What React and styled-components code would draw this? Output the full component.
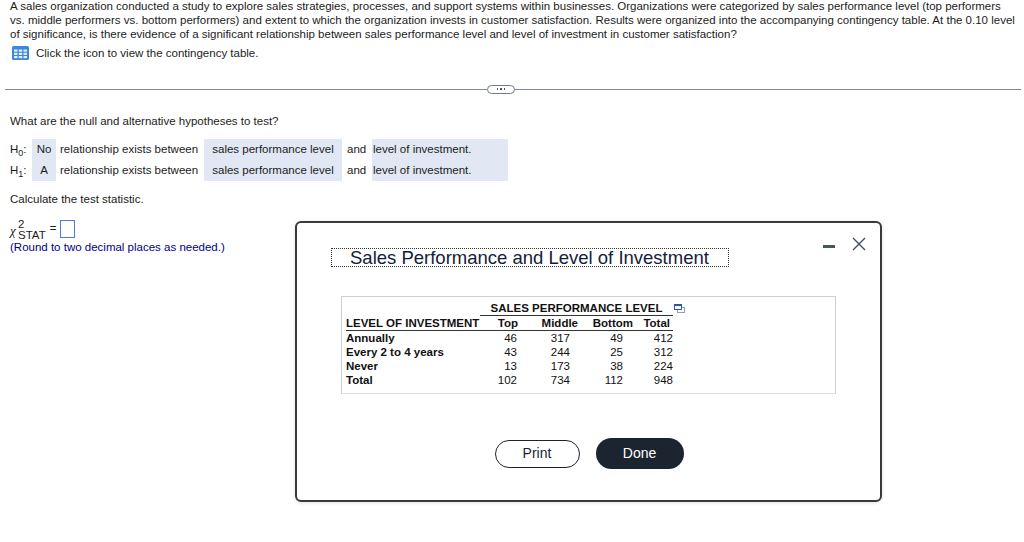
import React from 'react';
import styled, { createGlobalStyle } from 'styled-components';

const GlobalStyle = createGlobalStyle`
  html, body { margin: 0; padding: 0; background: #fff; }
  body {
    font-family: "Liberation Sans", Arial, sans-serif;
    font-size: 11.5px;
    color: #1c1c1c;
  }
`;

const Page = styled.div`
  position: relative;
  width: 1024px;
  height: 542px;
  overflow: hidden;
`;

const Intro = styled.div`
  padding-left: 10px;
  margin-top: -1px;
  line-height: 14px;
  height: 41px;
  white-space: nowrap;
`;

const IconLine = styled.div`
  display: flex;
  align-items: center;
  gap: 7px;
  height: 16px;
  margin: 5px 0 0 12px;
`;

const DividerRow = styled.div`
  display: flex;
  align-items: center;
  height: 10px;
  margin: 23px 3px 0 5px;
`;

const Rule = styled.div`
  height: 1px;
  background: #7d8794;
  flex: ${(p) => p.$grow};
`;

const MoreButton = styled.div`
  width: 26px;
  height: 7px;
  border: 1px solid #6f7c8d;
  border-radius: 5px;
  display: flex;
  align-items: center;
  justify-content: center;
  gap: 2px;
  background: #fff;
`;

const Dot = styled.span`
  width: 1.5px;
  height: 1.5px;
  background: #44546a;
`;

const Question = styled.div`
  margin: ${(p) => p.$top}px 0 0 10px;
  line-height: 14px;
`;

const HypothesisGrid = styled.div`
  display: grid;
  grid-template-columns: 22px 24px 148px 138px 30px 136px;
  grid-auto-rows: 21px;
  margin: 11px 0 0 10px;
  align-items: center;
`;

const Cell = styled.div`
  height: 21px;
  line-height: 20px;
  white-space: nowrap;
  background: ${(p) => (p.$fill ? '#e1e8f3' : 'transparent')};
  text-align: ${(p) => p.$align || 'left'};
  padding-left: ${(p) => p.$pad || 0}px;
`;

const Sub = styled.sub`
  font-size: 9px;
  line-height: 0;
`;

const Formula = styled.div`
  display: flex;
  align-items: center;
  height: 20px;
  margin: 12px 0 0 10px;
`;

const Chi = styled.span`
  font-family: "Liberation Serif", serif;
  font-style: italic;
  font-size: 13px;
  width: 8px;
  margin-top: 5px;
`;

const Stack = styled.span`
  display: inline-flex;
  flex-direction: column;
  font-size: 11.5px;
  line-height: 11px;
  margin-top: 4px;
`;

const Equals = styled.span`
  margin: 0 4px 0 4px;
`;

const AnswerBox = styled.div`
  width: 13px;
  height: 16px;
  margin-top: 1px;
  border: 1px solid #4f7fd0;
  box-shadow: inset 0 0 1px #a9c2ea;
`;

const Note = styled.div`
  margin: 2px 0 0 10px;
  line-height: 14px;
  color: #00008b;
`;

const Modal = styled.div`
  position: absolute;
  left: 295px;
  top: 221px;
  width: 583px;
  height: 277px;
  background: #fff;
  border: 2px solid #3a3a3a;
  border-radius: 6px;
  box-shadow: 0 1px 4px rgba(0, 0, 0, 0.12);
  display: flex;
  flex-direction: column;
`;

const WindowControls = styled.div`
  position: absolute;
  right: 14px;
  top: 14px;
  display: flex;
  align-items: center;
  gap: 17px;
`;

const Minimize = styled.div`
  width: 12px;
  height: 3px;
  margin-top: 4px;
  background: #4a5563;
`;

const Title = styled.div`
  box-sizing: border-box;
  width: 398px;
  height: 19px;
  margin: 25px 0 0 34px;
  padding-left: 18px;
  border: 1px dotted #333;
  font-size: 18.5px;
  line-height: 18px;
  color: #14203a;
  white-space: nowrap;
`;

const TablePanel = styled.div`
  box-sizing: border-box;
  position: relative;
  width: 495px;
  height: 98px;
  margin: 29px 0 0 44px;
  padding: 4px 0 0 4px;
  border: 1px solid #cfcfcf;
  border-bottom-color: #e2e2e2;
`;

const DataTable = styled.table`
  border-collapse: collapse;
  table-layout: fixed;
  width: 327px;
  font-size: 11.5px;
  color: #111;
  line-height: 14px;
`;

const Col = styled.col`
  width: ${(p) => p.$w}px;
`;

const Th = styled.th`
  padding: 0 ${(p) => p.$pr || 0}px 0 0;
  height: 14px;
  font-weight: 700;
  text-align: ${(p) => p.$align || 'right'};
  white-space: nowrap;
  border-bottom: ${(p) => (p.$line ? '1px solid #333' : 'none')};
`;

const Td = styled.td`
  padding: 0 ${(p) => p.$pr}px 0 0;
  height: 14px;
  text-align: right;
`;

const RowLabel = styled.td`
  padding: 0;
  height: 14px;
  font-weight: 700;
  white-space: nowrap;
`;

const CopyIcon = styled.svg`
  position: absolute;
  left: 332px;
  top: 7px;
`;

const ButtonRow = styled.div`
  display: flex;
  align-items: center;
  gap: 16px;
  margin: 44px 0 0 198px;
`;

const PillButton = styled.div`
  box-sizing: border-box;
  display: flex;
  align-items: center;
  justify-content: center;
  padding: 0 1px 1px 0;
  font-size: 14px;
  border-radius: 16px;
  width: ${(p) => (p.$primary ? 88 : 85)}px;
  height: ${(p) => (p.$primary ? 31 : 28)}px;
  color: ${(p) => (p.$primary ? '#fff' : '#1c2430')};
  background: ${(p) => (p.$primary ? '#1c2430' : '#fff')};
  border: ${(p) => (p.$primary ? 'none' : '1.5px solid #1c2430')};
`;

const rows = [
  ['Annually', 46, 317, 49, 412],
  ['Every 2 to 4 years', 43, 244, 25, 312],
  ['Never', 13, 173, 38, 224],
  ['Total', 102, 734, 112, 948],
];

// right padding of the numbers, per column
const numberPad = [1, 10, 12, 0];

function GridIcon() {
  return (
    <svg width="17" height="14" viewBox="0 0 17 14">
      <rect width="17" height="14" rx="1.5" fill="#3b86de" />
      {[3.5, 6.75, 10].map((y) =>
        [2, 6.75, 11.5].map((x) => (
          <rect key={`${x}-${y}`} x={x} y={y} width="3.5" height="2.2" fill="#e3eefb" />
        ))
      )}
    </svg>
  );
}

function App() {
  return (
    <Page>
      <GlobalStyle />
      <Intro>
        A sales organization conducted a study to explore sales strategies, processes, and support systems within businesses. Organizations were categorized by sales performance level (top performers<br />
        vs. middle performers vs. bottom performers) and extent to which the organization invests in customer satisfaction. Results were organized into the accompanying contingency table. At the 0.10 level<br />
        of significance, is there evidence of a significant relationship between sales performance level and level of investment in customer satisfaction?
      </Intro>
      <IconLine>
        <GridIcon />
        <span>Click the icon to view the contingency table.</span>
      </IconLine>
      <DividerRow>
        <Rule $grow="0 0 482px" />
        <MoreButton><Dot /><Dot /><Dot /></MoreButton>
        <Rule $grow="1" />
      </DividerRow>
      <Question $top={20}>What are the null and alternative hypotheses to test?</Question>
      <HypothesisGrid>
        <Cell>H<Sub>0</Sub>:</Cell>
        <Cell $fill $align="center">No</Cell>
        <Cell $pad={4}>relationship exists between</Cell>
        <Cell $fill $align="center">sales performance level</Cell>
        <Cell $pad={5}>and</Cell>
        <Cell $fill $pad={1}>level of investment.</Cell>
        <Cell>H<Sub>1</Sub>:</Cell>
        <Cell $fill $align="center">A</Cell>
        <Cell $pad={4}>relationship exists between</Cell>
        <Cell $fill $align="center">sales performance level</Cell>
        <Cell $pad={5}>and</Cell>
        <Cell $fill $pad={1}>level of investment.</Cell>
      </HypothesisGrid>
      <Question $top={11}>Calculate the test statistic.</Question>
      <Formula>
        <Chi>χ</Chi>
        <Stack><span>2</span><span>STAT</span></Stack>
        <Equals>=</Equals>
        <AnswerBox />
      </Formula>
      <Note>(Round to two decimal places as needed.)</Note>

      <Modal>
        <WindowControls>
          <Minimize />
          <svg width="14" height="14" viewBox="0 0 14 14" fill="none" stroke="#3f4b5b" strokeWidth="1.3">
            <path d="M1 1 13 13M13 1 1 13" />
          </svg>
        </WindowControls>
        <Title>Sales Performance and Level of Investment</Title>
        <TablePanel>
          <DataTable>
            <colgroup>
              <Col $w={134} />
              <Col $w={38} />
              <Col $w={62} />
              <Col $w={55} />
              <Col $w={38} />
            </colgroup>
            <thead>
              <tr>
                <Th />
                <Th colSpan={4} $align="center" $line>SALES PERFORMANCE LEVEL</Th>
              </tr>
              <tr>
                <Th $align="left" $line>LEVEL OF INVESTMENT</Th>
                <Th $line>Top</Th>
                <Th $line $pr={2}>Middle</Th>
                <Th $line $pr={2}>Bottom</Th>
                <Th $line $pr={3}>Total</Th>
              </tr>
            </thead>
            <tbody>
              {rows.map((r) => (
                <tr key={r[0]}>
                  <RowLabel>{r[0]}</RowLabel>
                  {r.slice(1).map((n, i) => (
                    <Td key={i} $pr={numberPad[i]}>{n}</Td>
                  ))}
                </tr>
              ))}
            </tbody>
          </DataTable>
          <CopyIcon width="11" height="9" viewBox="0 0 11 9" fill="none">
            <rect x="3.5" y="3.5" width="7" height="5" stroke="#8aa0c4" fill="#fff" />
            <rect x="0.5" y="0.5" width="7" height="5" stroke="#2d55b0" fill="#fff" />
            <rect x="0.5" y="0.5" width="7" height="1.5" fill="#2d55b0" />
          </CopyIcon>
        </TablePanel>
        <ButtonRow>
          <PillButton>Print</PillButton>
          <PillButton $primary>Done</PillButton>
        </ButtonRow>
      </Modal>
    </Page>
  );
}

export default App;
